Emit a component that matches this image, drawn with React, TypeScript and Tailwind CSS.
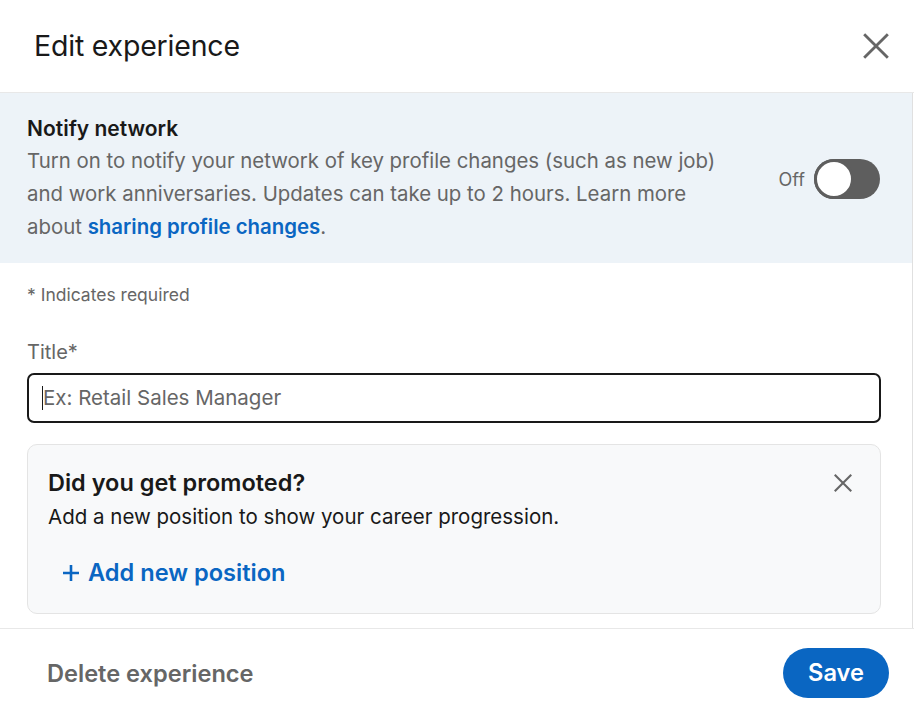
import React from "react";

const font = { fontFamily: "Inter, 'Liberation Sans', sans-serif" };

function XIcon({ size, stroke }: { size: number; stroke: number }) {
  return (
    <svg width={size} height={size} viewBox="0 0 24 24" fill="none">
      <path d="M2 2 L22 22 M22 2 L2 22" stroke="#666666" strokeWidth={stroke} strokeLinecap="square" />
    </svg>
  );
}

export default function App() {
  return (
    <div className="w-[914px] h-[716px] bg-white flex flex-col overflow-hidden text-[#191919]" style={font}>
      {/* Header */}
      <div className="h-[93px] shrink-0 flex items-center justify-between pl-[34px] pr-[25px] border-b border-[#e8e8e8]">
        <h2 className="text-[28.5px] leading-[34px] font-normal text-[#191919] tracking-[-0.2px]">Edit experience</h2>
        <button className="w-[26px] h-[26px] flex items-center justify-center">
          <XIcon size={26} stroke={2.6} />
        </button>
      </div>

      {/* Body */}
      <div className="flex-1 flex flex-col border-r border-[#e0e0e0] mr-[1px]">
        <div className="bg-[#edf3f8] h-[170px] shrink-0 pl-[27px] pr-[32px] pt-[16px] flex items-center justify-between">
          <div className="w-[705px] -mt-[14px]">
            <div className="text-[21px] leading-[26px] font-semibold text-[#191919]">Notify network</div>
            <p className="text-[20.4px] leading-[33px] text-[#666666] mt-[2px]">
              Turn on to notify your network of key profile changes (such as new job) and work anniversaries. Updates can take up to 2 hours. Learn more about{" "}
              <span className="text-[#0a66c2] font-semibold">sharing profile changes</span>.
            </p>
          </div>
          <div className="flex items-center gap-[9px] -mt-[14px]">
            <span className="text-[18px] text-[#666666]">Off</span>
            <div className="w-[66px] h-[40px] rounded-full bg-[#5e5e5e] relative">
              <div className="absolute left-0 top-0 w-[40px] h-[40px] rounded-full bg-white border-[3px] border-[#5e5e5e]" />
            </div>
          </div>
        </div>

        <div className="flex-1 pl-[27px] pr-[31px] flex flex-col">
          <div className="text-[17.5px] leading-[20px] text-[#666666] mt-[22px]">* Indicates required</div>
          <label className="text-[20px] leading-[26px] text-[#666666] mt-[34px]">Title*</label>
          <div className="mt-[8px] h-[50px] rounded-[7px] border-2 border-[#191919] flex items-center pl-[13px]">
            <span className="w-[1px] h-[24px] bg-[#191919]" />
            <span className="text-[20.5px] text-[#666666]">Ex: Retail Sales Manager</span>
          </div>

          <div className="mt-[21px] h-[170px] rounded-[10px] border border-[#e4e4e4] bg-[#f8f9fa] pl-[20px] pr-[28px] pt-[23px]">
            <div className="flex items-start justify-between">
              <div className="text-[23.5px] leading-[30px] font-semibold text-[#191919]">Did you get promoted?</div>
              <div className="mt-[6px]">
                <XIcon size={18} stroke={2.8} />
              </div>
            </div>
            <div className="text-[20.5px] leading-[26px] text-[#191919] mt-[6px]">Add a new position to show your career progression.</div>
            <div className="mt-[28px] ml-[14px] flex items-center gap-[8px] text-[#0a66c2]">
              <svg width="18" height="18" viewBox="0 0 18 18">
                <path d="M9 1 V17 M1 9 H17" stroke="#0a66c2" strokeWidth="2.6" />
              </svg>
              <span className="text-[23.6px] leading-[30px] font-semibold">Add new position</span>
            </div>
          </div>
        </div>
      </div>

      {/* Footer */}
      <div className="h-[88px] shrink-0 border-t border-[#e8e8e8] flex items-center justify-between pl-[47px] pr-[25px]">
        <span className="text-[23.6px] font-semibold text-[#666666] mt-[3px]">Delete experience</span>
        <button className="w-[106px] h-[50px] rounded-full bg-[#0a66c2] text-white text-[23.6px] font-semibold">Save</button>
      </div>
    </div>
  );
}
